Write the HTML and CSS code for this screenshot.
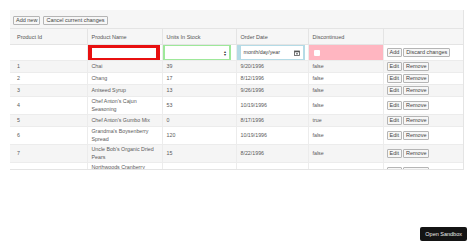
FILE: index.html
```html
<!DOCTYPE html>
<html lang="en">
<head>
  <meta charset="UTF-8">
  <title>Products Grid</title>
  <link rel="stylesheet" href="styles.css">
</head>
<body>

  <div class="grid">
    <div class="toolbar">
      <button class="btn">Add new</button>
      <button class="btn">Cancel current changes</button>
    </div>

    <table class="products">
      <colgroup>
        <col class="c-id"><col class="c-name"><col class="c-units"><col class="c-date"><col class="c-disc"><col class="c-cmd">
      </colgroup>
      <thead>
        <tr>
          <th>Product Id</th>
          <th>Product Name</th>
          <th>Units In Stock</th>
          <th>Order Date</th>
          <th>Discontinued</th>
          <th></th>
        </tr>
      </thead>
      <tbody>
        <tr class="insert-row">
          <td></td>
          <td class="edit-cell"><div class="wrap wrap-red"><input class="field" type="text"></div></td>
          <td class="edit-cell"><div class="wrap wrap-green"><div class="field num"><span class="spin">&#9652;<br>&#9662;</span></div></div></td>
          <td class="edit-cell"><div class="wrap wrap-blue"><div class="field date">month/day/year<span class="cal"><svg width="6" height="6" viewBox="0 0 6 6"><rect x="0.5" y="1" width="5" height="4.5" fill="none" stroke="#555" stroke-width="0.8"/><rect x="0.5" y="1" width="5" height="1.3" fill="#555"/><rect x="2" y="3" width="2" height="1.5" fill="#888"/></svg></span></div></div></td>
          <td class="edit-cell"><div class="wrap wrap-pink"><span class="check"></span></div></td>
          <td class="cmd"><button class="btn">Add</button><button class="btn">Discard changes</button></td>
        </tr>
        <tr class="alt"><td>1</td><td>Chai</td><td>39</td><td>9/20/1996</td><td>false</td><td class="cmd"><button class="btn">Edit</button><button class="btn">Remove</button></td></tr>
        <tr><td>2</td><td>Chang</td><td>17</td><td>8/12/1996</td><td>false</td><td class="cmd"><button class="btn">Edit</button><button class="btn">Remove</button></td></tr>
        <tr class="alt"><td>3</td><td>Aniseed Syrup</td><td>13</td><td>9/26/1996</td><td>false</td><td class="cmd"><button class="btn">Edit</button><button class="btn">Remove</button></td></tr>
        <tr><td>4</td><td>Chef Anton's Cajun Seasoning</td><td>53</td><td>10/19/1996</td><td>false</td><td class="cmd"><button class="btn">Edit</button><button class="btn">Remove</button></td></tr>
        <tr class="alt"><td>5</td><td>Chef Anton's Gumbo Mix</td><td>0</td><td>8/17/1996</td><td>true</td><td class="cmd"><button class="btn">Edit</button><button class="btn">Remove</button></td></tr>
        <tr><td>6</td><td>Grandma's Boysenberry Spread</td><td>120</td><td>10/19/1996</td><td>false</td><td class="cmd"><button class="btn">Edit</button><button class="btn">Remove</button></td></tr>
        <tr class="alt"><td>7</td><td>Uncle Bob's Organic Dried Pears</td><td>15</td><td>8/22/1996</td><td>false</td><td class="cmd"><button class="btn">Edit</button><button class="btn">Remove</button></td></tr>
        <tr><td>8</td><td>Northwoods Cranberry Sauce</td><td>6</td><td>10/14/1996</td><td>false</td><td class="cmd"><button class="btn">Edit</button><button class="btn">Remove</button></td></tr>
      </tbody>
    </table>
  </div>

  <button class="sandbox">Open Sandbox</button>

</body>
</html>
```

FILE: styles.css
```css
body {
  margin: 0;
  background: #fff;
  font-family: "Liberation Sans", Arial, sans-serif;
  font-size: 5.3px;
  color: #5a5a5a;
}

.grid {
  margin: 10px 0 0 10px;
  width: 454px;
  height: 160px;
  overflow: hidden;
  border-right: 1px solid #e4e4e4;
  border-bottom: 1px solid #e4e4e4;
  box-sizing: border-box;
}

.toolbar {
  background: #f6f6f6;
  padding: 6px 3px 3px;
  height: 19px;
  box-sizing: border-box;
  display: flex;
  align-items: flex-start;
  gap: 3px;
  border-bottom: 1px solid #e4e4e4;
}

.btn {
  font-family: inherit;
  font-size: 5.5px;
  color: #444;
  background: #f7f7f7;
  border: 1px solid #b5b5b5;
  border-radius: 1px;
  padding: 0 2px;
  height: 9px;
  line-height: 7px;
  margin: 0;
  vertical-align: middle;
}

.products {
  width: 454px;
  table-layout: fixed;
  border-collapse: collapse;
}

.c-id { width: 77px; }
.c-name { width: 75px; }
.c-units { width: 74px; }
.c-date { width: 72px; }
.c-disc { width: 75px; }
.c-cmd { width: 81px; }

th {
  background: #f6f6f6;
  font-weight: normal;
  font-size: 5.5px;
  text-align: left;
  height: 15px;
  padding: 0 4px;
  color: #555;
  border-left: 1px solid #e4e4e4;
  border-bottom: 1px solid #e4e4e4;
}

th:first-child,
td:first-child {
  border-left: none;
  padding-left: 7px;
}

td {
  padding: 1px 4px;
  line-height: 7.5px;
  height: 9px;
  vertical-align: middle;
  border-left: 1px solid #ececec;
  border-top: 1px solid #ececec;
}

tr.alt td {
  background: #f5f5f5;
}

.insert-row td {
  height: 15px;
  padding-top: 0;
  padding-bottom: 0;
  border-top: none;
}

.insert-row td.edit-cell {
  padding: 0;
}

.wrap {
  height: 15px;
  box-sizing: border-box;
  display: flex;
  align-items: center;
}

.wrap-red {
  background: #e81010;
  padding: 3px 4px 2px;
  margin-right: 2px;
}

.wrap-green {
  background: #9ee89a;
  padding: 1px 2px;
  margin-right: 5px;
}

.wrap-blue {
  background: #b5dbe6;
  padding: 1px 2px 1px 4px;
  margin-right: 3px;
}

.wrap-pink {
  background: #ffb6c1;
  padding: 0 4px;
}

.field {
  flex: 1;
  height: 100%;
  box-sizing: border-box;
  background: #fff;
  border: none;
  margin: 0;
  padding: 0 3px;
  font-family: inherit;
  font-size: 5.3px;
  color: #444;
  display: flex;
  align-items: center;
  min-width: 0;
}

.num {
  justify-content: flex-end;
}

.spin {
  font-size: 4px;
  line-height: 3px;
  color: #333;
}

.date {
  justify-content: space-between;
}

.cal {
  display: flex;
}

.check {
  width: 6px;
  height: 6px;
  background: #fff;
  border-radius: 1px;
  margin-left: 1px;
}

td.cmd {
  padding-left: 3px;
  white-space: nowrap;
}

td.cmd .btn {
  margin-right: 1px;
}

.sandbox {
  position: fixed;
  right: 7px;
  bottom: 7px;
  background: #141414;
  color: #eee;
  border: none;
  border-radius: 2px;
  font-family: inherit;
  font-size: 5.5px;
  height: 14px;
  padding: 0 5px;
}
```
